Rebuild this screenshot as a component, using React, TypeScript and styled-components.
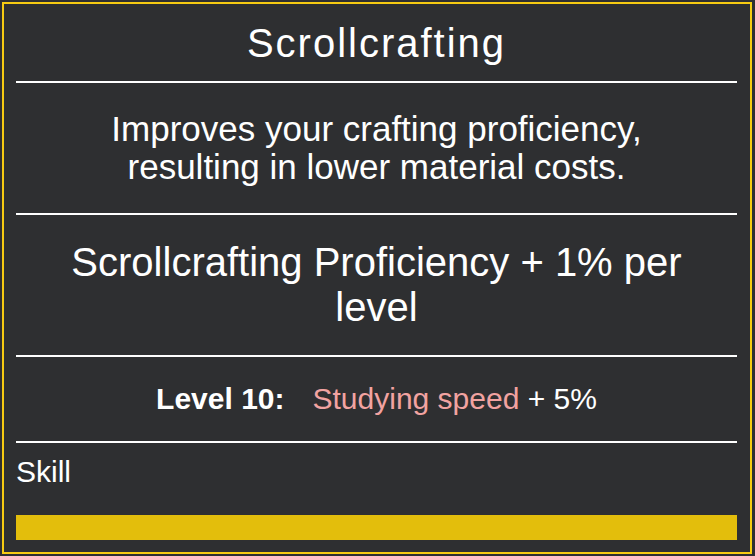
import React from 'react';
import styled, { createGlobalStyle } from 'styled-components';

const GlobalStyle = createGlobalStyle`
  html, body {
    margin: 0;
    padding: 0;
    background-color: #2e2f31;
  }
  body {
    font-family: 'Liberation Sans', Arial, sans-serif;
    color: #ffffff;
  }
`;

const skill = {
  name: 'Scrollcrafting',
  description: 'Improves your crafting proficiency, resulting in lower material costs.',
  effect: 'Scrollcrafting Proficiency + 1% per level',
  milestone: { level: 10, stat: 'Studying speed', bonus: '+ 5%' },
  progress: 100,
};

export default function App() {
  return (
    <>
      <GlobalStyle />
      <StyledSkillCard>
        <StyledTitle>{skill.name}</StyledTitle>
        <StyledSection $size={35} $lineHeight={38} $top={27} $bottom={27}>
          {skill.description}
        </StyledSection>
        <StyledSection $size={40} $lineHeight={45} $top={25} $bottom={25}>
          {skill.effect}
        </StyledSection>
        <StyledSection $size={30} $lineHeight={34} $top={25} $bottom={25}>
          <StyledMilestone>
            <StyledMilestoneLevel>Level {skill.milestone.level}:</StyledMilestoneLevel>
            <span>
              <StyledStat>{skill.milestone.stat}</StyledStat> {skill.milestone.bonus}
            </span>
          </StyledMilestone>
        </StyledSection>
        <StyledSkillFooter>
          <StyledSkillLabel>Skill</StyledSkillLabel>
          <StyledProgressTrack>
            <StyledProgressFill style={{ width: `${skill.progress}%` }} />
          </StyledProgressTrack>
        </StyledSkillFooter>
      </StyledSkillCard>
    </>
  );
}

const StyledSkillCard = styled.div`
  box-sizing: border-box;
  width: 750px;
  margin: 2px;
  border: 2px solid #f6cb12;
  padding: 0 13px 0 12px;
  display: flex;
  flex-direction: column;
`;

const StyledTitle = styled.h1`
  margin: 0;
  padding: 17px 0 15px;
  font-size: 40px;
  font-weight: normal;
  letter-spacing: 2px;
  text-align: center;
  border-bottom: 2px solid #ffffff;
`;

const StyledSection = styled.div<{
  $size: number;
  $lineHeight: number;
  $top: number;
  $bottom: number;
}>`
  padding: ${({ $top, $bottom }) => `${$top}px 40px ${$bottom}px`};
  font-size: ${({ $size }) => $size}px;
  line-height: ${({ $lineHeight }) => $lineHeight}px;
  text-align: center;
  border-bottom: 2px solid #ffffff;
`;

const StyledMilestone = styled.div`
  display: flex;
  justify-content: center;
  gap: 28px;
  white-space: pre;
`;

const StyledMilestoneLevel = styled.span`
  font-weight: bold;
`;

const StyledStat = styled.span`
  color: #f2a3a1;
`;

const StyledSkillFooter = styled.div`
  padding: 11px 0 12px;
  display: flex;
  flex-direction: column;
  gap: 26px;
`;

const StyledSkillLabel = styled.div`
  font-size: 30px;
  line-height: 35px;
`;

const StyledProgressTrack = styled.div`
  height: 25px;
  background-color: #3a3b3d;
`;

const StyledProgressFill = styled.div`
  height: 100%;
  background-color: #e3be0c;
`;
